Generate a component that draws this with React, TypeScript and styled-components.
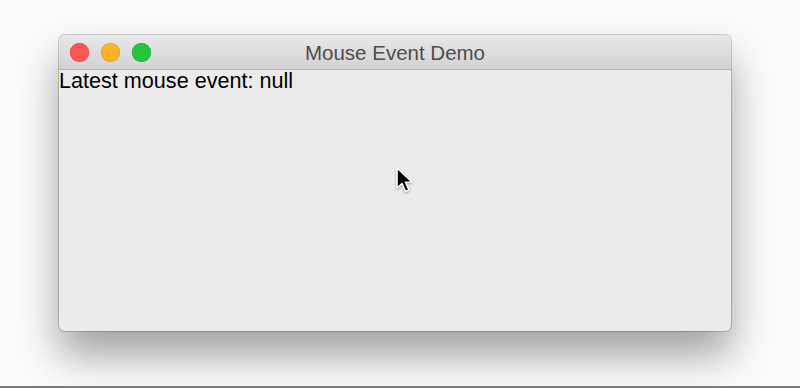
import React from 'react'
import styled, {createGlobalStyle} from 'styled-components'

const Global = createGlobalStyle`
  html, body {
    margin: 0;
    padding: 0;
    background: #fbfbfb;
    font-family: 'Liberation Sans', Arial, sans-serif;
  }
`

const Stage = styled.div`
  width: 800px;
  height: 388px;
  display: flex;
  flex-direction: column;
  background: #fbfbfb;
  overflow: hidden;
`

const Desk = styled.div`
  flex: 1;
  padding: 35px 0 0 59px;
`

const Baseline = styled.div`
  height: 2px;
  background: #7a7a7a;
`

const Window = styled.div`
  width: 672px;
  height: 296px;
  display: flex;
  flex-direction: column;
  border-radius: 6px;
  overflow: hidden;
  background: #ecebec;
  box-shadow: 0 0 0 1px rgba(0, 0, 0, 0.18), 0 24px 42px rgba(0, 0, 0, 0.36);
`

const TitleBar = styled.div`
  position: relative;
  height: 35px;
  flex-shrink: 0;
  display: flex;
  align-items: center;
  justify-content: center;
  padding-top: 2px;
  box-sizing: border-box;
  background: linear-gradient(#e9e8e9, #d3d2d3);
  border-bottom: 1px solid #b3b2b3;
`

const Lights = styled.div`
  position: absolute;
  left: 11px;
  top: 8px;
  display: flex;
  gap: 12px;
`

const Light = styled.span<{$color: string; $edge: string}>`
  width: 19px;
  height: 19px;
  border-radius: 50%;
  background: ${p => p.$color};
  box-shadow: inset 0 0 0 0.5px ${p => p.$edge};
`

const Title = styled.div`
  font-size: 20.5px;
  color: #4d4d4d;
`

const Content = styled.div`
  position: relative;
  flex: 1;
`

const Message = styled.div`
  font-size: 21.6px;
  line-height: 22px;
  color: #000;
`

const Cursor = styled.svg`
  position: absolute;
  left: 336px;
  top: 97px;
  filter: drop-shadow(0 1px 1px rgba(0, 0, 0, 0.35));
`

export default function App() {
  return (
    <Stage>
      <Global />
      <Desk>
        <Window>
          <TitleBar>
            <Lights>
              <Light $color="#fd5754" $edge="#df3d3a" />
              <Light $color="#fdb22a" $edge="#de9a1c" />
              <Light $color="#27c43f" $edge="#1aa72c" />
            </Lights>
            <Title>Mouse Event Demo</Title>
          </TitleBar>
          <Content>
            <Message>Latest mouse event: null</Message>
            <Cursor width="20" height="28" viewBox="0 0 20 28">
              <path
                d="M2 1 L2 21 L7 16.5 L10.5 24.5 L14 23 L10.5 15.2 L17 15 Z"
                fill="#000"
                stroke="#fff"
                strokeWidth="1.6"
                strokeLinejoin="round"
              />
            </Cursor>
          </Content>
        </Window>
      </Desk>
      <Baseline />
    </Stage>
  )
}
